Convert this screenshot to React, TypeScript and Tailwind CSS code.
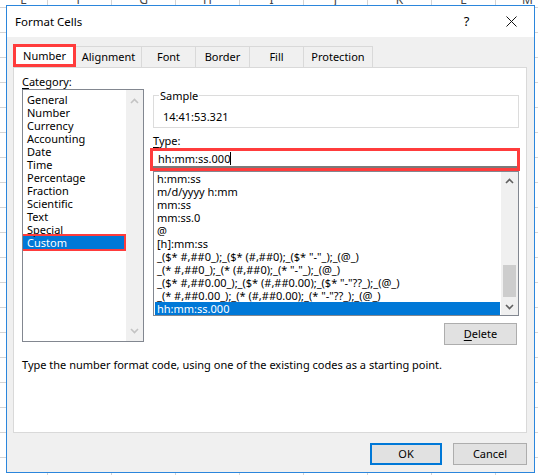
import React from 'react'

const columns = ['E', 'F', 'G', 'H', 'I', 'J', 'K', 'L', 'M']

const categories = [
  'General',
  'Number',
  'Currency',
  'Accounting',
  'Date',
  'Time',
  'Percentage',
  'Fraction',
  'Scientific',
  'Text',
  'Special',
  'Custom',
]

const formatCodes = [
  'h:mm:ss',
  'm/d/yyyy h:mm',
  'mm:ss',
  'mm:ss.0',
  '@',
  '[h]:mm:ss',
  '_($* #,##0_);_($* (#,##0);_($* "-"_);_(@_)',
  '_(* #,##0_);_(* (#,##0);_(* "-"_);_(@_)',
  '_($* #,##0.00_);_($* (#,##0.00);_($* "-"??_);_(@_)',
  '_(* #,##0.00_);_(* (#,##0.00);_(* "-"??_);_(@_)',
]

const tabs = [
  { label: 'Alignment', w: 'w-[67px]' },
  { label: 'Font', w: 'w-[55px]' },
  { label: 'Border', w: 'w-[55px]' },
  { label: 'Fill', w: 'w-[55px]' },
  { label: 'Protection', w: 'w-[70px]' },
]

const Chevron: React.FC<{ up?: boolean; className: string }> = ({ up, className }) => (
  <svg width="9" height="6" viewBox="0 0 9 6" className={className}>
    <polyline
      points={up ? '1,5 4.5,1.5 8,5' : '1,1 4.5,4.5 8,1'}
      fill="none"
      stroke="currentColor"
      strokeWidth="1.6"
    />
  </svg>
)

// spreadsheet behind the dialog
const Sheet: React.FC = () => (
  <div className="absolute inset-0">
    <div className="absolute inset-0 flex">
      {columns.map((c, i) => (
        <div
          key={c}
          className={`${i === 0 ? 'w-[48px]' : 'w-[64px]'} shrink-0 h-full border-r border-[#d4d4d4]`}
        >
          <div className="h-[8px] overflow-hidden text-center text-[12px] text-[#444]">
            <span className="block leading-[8px] -translate-y-[4px]">{c}</span>
          </div>
        </div>
      ))}
    </div>
    <div className="absolute inset-0 flex flex-col">
      <div className="h-[8px] shrink-0 border-b border-[#d4d4d4]" />
      {Array.from({ length: 19 }).map((_, i) => (
        <div key={i} className="h-[25px] shrink-0 border-b border-[#d4d4d4]" />
      ))}
    </div>
  </div>
)

const App: React.FC = () => {
  return (
    <div className="relative w-[538px] h-[475px] overflow-hidden bg-white font-['Segoe_UI','Noto_Sans',sans-serif] text-[11px] text-black">
      <Sheet />

      {/* Format Cells dialog */}
      <div className="absolute left-[6px] top-[5px] w-[529px] h-[468px] border border-[#2b86dc] bg-[#f0f0f0] flex flex-col">
        {/* Title bar */}
        <div className="h-[31px] shrink-0 bg-white flex items-center pl-[8px]">
          <span className="text-[11.5px] leading-[14px]">Format Cells</span>
          <div className="ml-auto flex h-full">
            <div className="w-[45px] h-full flex items-center justify-center text-[13px]">?</div>
            <div className="w-[45px] h-full flex items-center justify-center">
              <svg width="11" height="11" viewBox="0 0 11 11">
                <path d="M0.5 0.5 L10.5 10.5 M10.5 0.5 L0.5 10.5" stroke="#111" strokeWidth="1" />
              </svg>
            </div>
          </div>
        </div>

        {/* Tabs */}
        <div className="mt-[7px] h-[23px] flex items-end pl-[6px]">
          <div className="relative z-10 w-[63px] h-[23px] bg-white border-[3px] border-[#ff3c3c] flex items-center justify-center leading-[14px]">
            Number
          </div>
          {tabs.map((t) => (
            <div
              key={t.label}
              className={`${t.w} h-[21px] -ml-px border border-b-0 border-[#d9d9d9] bg-[#f0f0f0] flex items-center justify-center leading-[14px]`}
            >
              {t.label}
            </div>
          ))}
        </div>

        {/* Tab panel */}
        <div className="ml-[6px] w-[514px] h-[366px] border border-[#d9d9d9] bg-white flex flex-col">
          <div className="flex pl-[8px]">
            {/* Category */}
            <div className="w-[122px] pt-[6px] flex flex-col">
              <div className="h-[15px] leading-[15px]">
                <span className="underline underline-offset-2">C</span>ategory:
              </div>
              <div className="h-[253px] border border-[#828790] flex">
                <div className="flex-1 pt-[3px] overflow-hidden">
                  {categories.map((c) =>
                    c === 'Custom' ? (
                      <div
                        key={c}
                        className="h-[13px] leading-[13px] mr-[2px] pl-[4px] bg-[#0078d7] text-white outline-2 outline-[#ff3c3c]"
                      >
                        {c}
                      </div>
                    ) : (
                      <div key={c} className="h-[13px] leading-[13px] pl-[4px] whitespace-nowrap">
                        {c}
                      </div>
                    ),
                  )}
                </div>
                <div className="w-[17px] bg-[#f0f0f0] flex flex-col justify-between">
                  <div className="h-[21px] flex items-center justify-center">
                    <Chevron up className="text-[#c3c3c3]" />
                  </div>
                  <div className="h-[20px] flex items-center justify-center">
                    <Chevron className="text-[#c3c3c3]" />
                  </div>
                </div>
              </div>
            </div>

            {/* Sample / Type */}
            <div className="ml-[9px] w-[366px] pt-[27px] flex flex-col">
              <div className="relative h-[33px] border border-[#dcdcdc]">
                <span className="absolute left-[5px] -top-[7px] bg-white px-px leading-[14px]">Sample</span>
                <div className="pl-[9px] pt-[14px] leading-[14px]">14:41:53.321</div>
              </div>

              <div className="mt-[6px] h-[14px] leading-[14px]">
                <span className="underline underline-offset-2">T</span>ype:
              </div>

              <div className="-ml-[3px] w-[370px] h-[23px] border-[3px] border-[#ff3c3c] bg-white">
                <div className="h-full border-b-2 border-[#7a7a7a] flex items-center pl-[5px]">
                  <span className="leading-[15px]">hh:mm:ss.000</span>
                  <span className="w-px h-[13px] bg-black" />
                </div>
              </div>

              <div className="h-[145px] border border-[#828790] flex">
                <div className="flex-1 min-w-0 overflow-hidden">
                  {formatCodes.map((f, i) => (
                    <div key={i} className="h-[13px] leading-[13px] pl-[3px] whitespace-nowrap">
                      {f}
                    </div>
                  ))}
                  <div className="h-[13px] leading-[13px] mx-px pl-[2px] bg-[#0078d7] text-white">hh:mm:ss.000</div>
                </div>
                <div className="w-[17px] bg-[#f0f0f0] flex flex-col">
                  <div className="h-[17px] flex items-center justify-center">
                    <Chevron up className="text-[#606060]" />
                  </div>
                  <div className="flex-1 pt-[76px]">
                    <div className="mx-[2px] h-[32px] bg-[#cdcdcd]" />
                  </div>
                  <div className="h-[17px] flex items-center justify-center">
                    <Chevron className="text-[#606060]" />
                  </div>
                </div>
              </div>

              <button className="mt-[7px] self-end mr-[2px] w-[73px] h-[22px] border border-[#adadad] bg-[#e1e1e1] flex items-center justify-center leading-[14px]">
                <span className="underline underline-offset-2">D</span>elete
              </button>
            </div>
          </div>

          <p className="mt-[13px] pl-[8px] leading-[14px]">
            Type the number format code, using one of the existing codes as a starting point.
          </p>
        </div>

        {/* Footer buttons */}
        <div className="mt-[10px] flex justify-end gap-[11px] pr-[7px]">
          <button className="w-[72px] h-[22px] border-2 border-[#0078d7] bg-[#e1e1e1] flex items-center justify-center leading-[14px]">
            OK
          </button>
          <button className="w-[74px] h-[22px] border border-[#adadad] bg-[#e1e1e1] flex items-center justify-center leading-[14px]">
            Cancel
          </button>
        </div>
      </div>
    </div>
  )
}

export default App
